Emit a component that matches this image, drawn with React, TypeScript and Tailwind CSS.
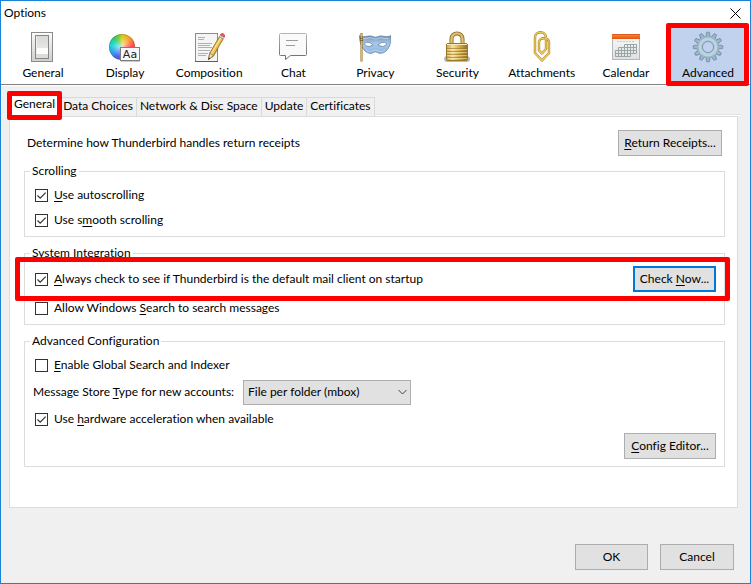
import { useState } from 'react';
import type { ReactNode } from 'react';

const tabs = ['General', 'Data Choices', 'Network & Disc Space', 'Update', 'Certificates'];

const categories = [
  { name: 'General', icon: <SwitchIcon /> },
  { name: 'Display', icon: <DisplayIcon /> },
  { name: 'Composition', icon: <ComposeIcon /> },
  { name: 'Chat', icon: <ChatIcon /> },
  { name: 'Privacy', icon: <MaskIcon /> },
  { name: 'Security', icon: <LockIcon /> },
  { name: 'Attachments', icon: <ClipIcon /> },
  { name: 'Calendar', icon: <CalendarIcon /> },
  { name: 'Advanced', icon: <GearIcon /> },
];

function SwitchIcon() {
  return (
    <svg className="w-8 h-8" viewBox="0 0 32 32">
      <defs>
        <linearGradient id="sw-frame" x1="0" y1="0" x2="0" y2="1">
          <stop offset="0" stopColor="#fbfbfb" />
          <stop offset="1" stopColor="#cfcfcd" />
        </linearGradient>
        <linearGradient id="sw-key" x1="0" y1="0" x2="0" y2="1">
          <stop offset="0" stopColor="#d8d8d6" />
          <stop offset="1" stopColor="#f4f4f3" />
        </linearGradient>
      </defs>
      <rect x="4.500" y="1.500" width="21" height="29" fill="url(#sw-frame)" stroke="#8b8b89" />
      <rect x="8.500" y="4.500" width="13" height="23" fill="url(#sw-key)" stroke="#868684" />
      <rect x="9" y="17" width="12" height="6" fill="#fdfdfd" />
      <rect x="9" y="23" width="12" height="4" fill="#dcdcda" />
      <path d="M9.500 5v18" stroke="#f2f2f0" />
    </svg>
  );
}

function DisplayIcon() {
  return (
    <span className="relative block w-8 h-8">
      <span className="absolute left-0 top-[3px] w-[26px] h-[26px] rounded-full bg-[conic-gradient(#d8d020,#ffa02a_40deg,#ff4a50_85deg,#f040a0_125deg,#9a50f0_170deg,#4a60f0_205deg,#30a0f0_240deg,#20d8e0_280deg,#38cc70_320deg,#88cc30_345deg,#d8d020)]">
        <span className="block w-full h-full rounded-full border border-black/20 bg-[radial-gradient(circle,#ffffffb0,#ffffff00_60%)]" />
      </span>
      <svg className="absolute inset-0 w-8 h-8" viewBox="0 0 32 32">
        <rect x="11.500" y="16.500" width="19" height="13" fill="#f8f8f8" stroke="#7d7d7d" />
        <path d="M12 30.500h19" stroke="#00000033" />
        <text x="21" y="27" textAnchor="middle" fontSize="11" fontFamily="DejaVu Sans, sans-serif" fill="#222">Aa</text>
      </svg>
    </span>
  );
}

function ComposeIcon() {
  return (
    <svg className="w-8 h-8" viewBox="0 0 32 32">
      <rect x="2.500" y="2.500" width="22" height="28" fill="#f5f5f5" stroke="#8c8c8c" />
      <path d="M2 30.500h23" stroke="#5d5d5d" />
      <path d="M5 6.500h7M5 8.500h6M5 12.500h14M5 14.500h12M5 16.500h14M5 19.500h12M5 22.500h10M5 24.500h8" stroke="#b0b0b0" />
      <path d="M17 27l3-2 5-8" fill="none" stroke="#00000033" strokeWidth="2" />
      <path d="M15.500 28.500l1.200-6.300L26.500 5.500l3.800 2.200L20.500 24.600z" fill="#e9bd48" stroke="#8c6514" strokeWidth=".8" />
      <path d="M18 23.500L28 6.400" stroke="#fae39a" strokeWidth="1.200" />
      <path d="M15.500 28.500l1.200-6.300 3.800 2.400z" fill="#f0dcb0" stroke="#7a6238" strokeWidth=".6" />
      <path d="M15.300 29l.5-2.600 1.400.9z" fill="#222" />
      <path d="M26.300 5.800l1.200-2 3.800 2.200-1.200 2z" fill="#c8ccd2" stroke="#888" strokeWidth=".5" />
      <path d="M27.500 3.800c.8-1.500 2-1.500 3-.9s1.500 1.700.8 3.100z" fill="#ee5a60" stroke="#e0484e" />
    </svg>
  );
}

function ChatIcon() {
  return (
    <svg className="w-8 h-8" viewBox="0 0 32 32">
      <defs>
        <linearGradient id="chat-line" x1="0" y1="0" x2="0" y2="1">
          <stop offset="0" stopColor="#b4b4b4" />
          <stop offset="1" stopColor="#6a6a6a" />
        </linearGradient>
      </defs>
      <path d="M3.500 2.500h25q1 0 1 1v20q0 1-1 1H13.500L8.500 28.500v-4h-5q-1 0-1-1v-20q0-1 1-1z" fill="#fafafa" stroke="url(#chat-line)" />
      <path d="M9 9.500h12M9 14.500h9" stroke="#9c9c9c" />
    </svg>
  );
}

function MaskIcon() {
  return (
    <svg className="w-8 h-8" viewBox="0 0 32 32">
      <defs>
        <linearGradient id="mask-fill" x1="0" y1="0" x2="0" y2="1">
          <stop offset="0" stopColor="#6f90b2" />
          <stop offset=".45" stopColor="#a9c9ea" />
          <stop offset="1" stopColor="#8db4de" />
        </linearGradient>
      </defs>
      <path d="M.5 4.500C4 7 9 4.500 12 5c2 .3 3 1.200 4.500 1.200S19 5.300 21 5c3-.5 7 2 11-.5C32 12 30.500 17 27 20c-3 2.500-6.500 3-8.500 1.500-1.500-.9-2.500-.9-4 0C12.500 23 9 22.500 6 20 3 17 .5 12 .5 4.500z" fill="url(#mask-fill)" stroke="#6684a3" strokeWidth=".8" />
      <path d="M3.500 7.500c3.500.7 6-1 8.500-.7 2 .2 3 1.200 4.500 1.200S19 7 21 6.800c2.500-.3 5 1.400 8.500.7" fill="none" stroke="#d3e3f3" strokeWidth=".7" />
      <path d="M7 19c2.500 2.200 5 2 7 .8 1.500-.8 3.500-.8 5 0 2 1.200 4.500 1.400 7-.8" fill="none" stroke="#c3d9ef" strokeWidth=".8" />
      <path d="M5 12.500q5-3 9 1.500-6 3.500-9-1.500zM28 12.500q-5-3-9 1.500 6 3.500 9-1.500z" fill="#fff" stroke="#5c7896" strokeWidth=".7" />
      <path d="M2.500 2v28.500" stroke="#95680c" strokeWidth="2" />
      <path d="M2.500 2.500V30" stroke="#e9b73a" />
      <path d="M1 7.500h3M1 9.500h3" stroke="#7b5a18" strokeWidth=".8" />
    </svg>
  );
}

function LockIcon() {
  return (
    <svg className="w-8 h-8" viewBox="0 0 32 32">
      <defs>
        <linearGradient id="lock-body" x1="0" y1="0" x2="1" y2="0">
          <stop offset="0" stopColor="#cfa645" />
          <stop offset=".3" stopColor="#f5e19c" />
          <stop offset=".6" stopColor="#d6ae4c" />
          <stop offset="1" stopColor="#94701f" />
        </linearGradient>
      </defs>
      <rect x="3" y="25" width="26" height="6" rx="3" fill="#00000044" />
      <path d="M10.500 14V8c0-7.500 11-7.500 11 0v6" fill="none" stroke="#8a6a20" strokeWidth="4" />
      <path d="M10.500 14V8c0-7.500 11-7.500 11 0v6" fill="none" stroke="#dfc072" strokeWidth="2.400" />
      <rect x="5.500" y="12.500" width="21" height="17" rx="1.500" fill="url(#lock-body)" stroke="#9a772b" />
      <path d="M6 13.500h20" stroke="#f7e8b4" />
      <path d="M6 17.500h20M6 20.500h20M6 23.500h20M6 26.500h20" stroke="#92712a" strokeWidth=".6" />
      <path d="M6 18.500h20M6 21.500h20M6 24.500h20M6 27.500h20" stroke="#ffefb4" strokeOpacity=".5" />
    </svg>
  );
}

function ClipIcon() {
  const wire = 'M20 18V6.500c0-7-11-7-11 0V22l7 7.500 7-7.500V11c0-5-10-5-10 0v8.500l3 3 4-4.500';

  return (
    <svg className="w-8 h-8" viewBox="0 0 32 32" fill="none" strokeLinecap="round" strokeLinejoin="round">
      <path d={wire} stroke="#ad8120" strokeWidth="2.400" />
      <path d={wire} stroke="#f0d067" strokeWidth="1.200" />
    </svg>
  );
}

function CalendarIcon() {
  return (
    <svg className="w-8 h-8" viewBox="0 0 32 32">
      <defs>
        <linearGradient id="cal-head" x1="0" y1="0" x2="0" y2="1">
          <stop offset="0" stopColor="#f98c3c" />
          <stop offset="1" stopColor="#ea5310" />
        </linearGradient>
        <linearGradient id="cal-page" x1="0" y1="0" x2="0" y2="1">
          <stop offset="0" stopColor="#fbfbfb" />
          <stop offset="1" stopColor="#dedfe0" />
        </linearGradient>
      </defs>
      <rect x="2.500" y="3.500" width="27" height="25" fill="url(#cal-page)" stroke="#b4b7b9" />
      <rect x="2" y="3" width="28" height="5" fill="url(#cal-head)" />
      <path d="M2 3.500h28" stroke="#d4511a" strokeWidth=".8" />
      <path d="M7 10.500h17" stroke="#c7c9cb" strokeDasharray="2 1" />
      <path d="M5.500 19.500v6M8.500 16.500v9M11.500 16.500v9M14.500 13.500v12M17.500 13.500v12M20.500 13.500v12M23.500 13.500v9M26.500 13.500v9M14.500 13.500h12M8.500 16.500h18M5.500 19.500h21M5.500 22.500h21M5.500 25.500h15" fill="none" stroke="#9aa5a6" />
    </svg>
  );
}

function GearIcon() {
  return (
    <svg className="w-8 h-8" viewBox="0 0 32 32">
      {[0, 30, 60, 90, 120, 150, 180, 210, 240, 270, 300, 330].map(a => (
        <path key={a} d="M13.800 6l.9-4.800h2.600l.9 4.800z" transform={`rotate(${a} 16 16)`} fill="#9cb6c6" stroke="#6d8ca2" strokeWidth=".8" />
      ))}
      <circle cx="16" cy="16" r="10.800" fill="#9cb6c6" />
      <circle cx="16" cy="16" r="8" fill="none" stroke="#bcd3e2" strokeWidth="3" />
      <circle cx="16" cy="16" r="5.500" fill="#c1d1ee" stroke="#7593a8" strokeWidth=".8" />
    </svg>
  );
}

function Highlight({ className }: { className: string }) {
  return <span className={`pointer-events-none absolute z-10 rounded-xs border-5 border-[#ff0000] ${className}`} />;
}

// underlined access key
function Key({ children }: { children: ReactNode }) {
  return <span className="underline underline-offset-2">{children}</span>;
}

function Button({ children, className = '' }: { children: ReactNode; className?: string }) {
  return (
    <button className={`h-[26px] bg-[#e1e1e1] whitespace-nowrap ${className}`}>
      {children}
    </button>
  );
}

function Check({ checked = false, children }: { checked?: boolean; children: ReactNode }) {
  const [on, setOn] = useState(checked);

  return (
    <label className="flex h-6 items-center gap-[6px] pl-[2px]">
      <span className="relative block w-[13px] h-[13px]">
        <input
          type="checkbox"
          checked={on}
          onChange={e => setOn(e.target.checked)}
          className="block w-full h-full appearance-none border border-[#333] bg-white"
        />
        {on && (
          <svg className="pointer-events-none absolute inset-0 w-full h-full" viewBox="0 0 13 13">
            <path d="M2.500 6.500l2.700 2.700 5.500-5.500" fill="none" stroke="#333" strokeWidth="1.200" />
          </svg>
        )}
      </span>
      <span>{children}</span>
    </label>
  );
}

function Group({ title, className, children }: { title: string; className: string; children: ReactNode }) {
  return (
    <fieldset className={`border border-[#dcdcdc] px-2 pt-1 ${className}`}>
      <legend className="-ml-[3px] h-4 px-[2px] leading-4">{title}</legend>
      {children}
    </fieldset>
  );
}

export default function App() {
  const [tab, setTab] = useState('General');
  const [category, setCategory] = useState('Advanced');

  return (
    <div className="flex min-h-screen flex-col border border-[#1883d7] bg-[#f0f0f0] text-xs text-black font-['Lato','Liberation_Sans',sans-serif] [font-variant-ligatures:none]">
      {/* title bar */}
      <header className="border-b border-[#828282] bg-white">
        <div className="flex h-6 items-center justify-between pl-[3px] pr-[9px]">
          <h1>Options</h1>
          <button aria-label="Close">
            <svg className="w-[11px] h-[11px]" viewBox="0 0 11 11">
              <path d="M.5.5l10 10M10.500.5l-10 10" stroke="#000" />
            </svg>
          </button>
        </div>

        {/* categories */}
        <nav className="flex px-px">
          {categories.map(c => (
            <button
              key={c.name}
              onClick={() => setCategory(c.name)}
              className={`relative flex h-[59px] min-w-[82px] flex-col items-center gap-[2px] px-[10px] pt-[6px] ${
                category === c.name ? 'bg-[#c1d2ee]' : ''
              }`}
            >
              {c.icon}
              <span>{c.name}</span>
              {c.name === 'Advanced' && <Highlight className="-left-px right-0 -top-[2px] -bottom-[2px]" />}
            </button>
          ))}
        </nav>
      </header>

      <main className="flex flex-1 flex-col border-t border-white pl-2 pr-3">
        <div role="tablist" className="flex items-end pt-2">
          {tabs.map(t => (
            <button
              key={t}
              role="tab"
              aria-selected={tab === t}
              onClick={() => setTab(t)}
              className={
                tab === t
                  ? 'relative h-[22px] bg-white px-[5px] pb-[2px]'
                  : 'h-[19px] border-t border-r border-[#d9d9d9] px-[3px] pb-[2px]'
              }
            >
              {t}
              {t === 'General' && <Highlight className="-inset-x-[2px] -top-[3px] -bottom-[4px]" />}
            </button>
          ))}
          <span className="-mr-[3px] h-[2px] flex-1 border-t border-[#e3e3e3] bg-white" />
        </div>

        <div className="flex-1 border border-[#dcdcdc] bg-white pl-[14px] pr-3">
          <div className="flex items-center justify-between px-[3px] pt-[13px] pb-[7px]">
            <p>Determine how Thunderbird handles return receipts</p>
            <Button className="w-[104px] border border-[#adadad]"><Key>R</Key>eturn Receipts...</Button>
          </div>

          <Group title="Scrolling" className="pb-1">
            <div className="flex flex-col gap-px">
              <Check checked><Key>U</Key>se autoscrolling</Check>
              <Check checked>Use s<Key>m</Key>ooth scrolling</Check>
            </div>
          </Group>

          <Group title="System Integration" className="mt-2 pb-1">
            <div className="relative flex h-7 items-center justify-between">
              <Check checked><Key>A</Key>lways check to see if Thunderbird is the default mail client on startup</Check>
              <Button className="w-[83px] border-2 border-[#0078d7]">Check <Key>N</Key>ow...</Button>
              <Highlight className="-left-[18px] -right-[14px] -top-2 -bottom-2" />
            </div>
            <div className="pt-[3px]">
              <Check>Allow Windows <Key>S</Key>earch to search messages</Check>
            </div>
          </Group>

          <Group title="Advanced Configuration" className="mt-2 pb-[7px]">
            <Check><Key>E</Key>nable Global Search and Indexer</Check>
            <div className="flex h-[30px] items-center gap-2">
              <label htmlFor="store" className="w-[202px]">Message Store <Key>T</Key>ype for new accounts:</label>
              <div className="relative">
                <select id="store" className="block h-[25px] w-[168px] appearance-none border border-[#adadad] bg-[#e1e1e1] pl-1">
                  <option>File per folder (mbox)</option>
                  <option>File per message (maildir)</option>
                </select>
                <svg className="pointer-events-none absolute right-1 top-2 w-[9px] h-[9px]" viewBox="0 0 9 9">
                  <path d="M.5 2l4 4 4-4" fill="none" stroke="#444" />
                </svg>
              </div>
            </div>
            <Check checked>Use <Key>h</Key>ardware acceleration when available</Check>
            <div className="flex justify-end pt-[2px]">
              <Button className="w-[92px] border border-[#adadad]"><Key>C</Key>onfig Editor...</Button>
            </div>
          </Group>
        </div>

        <footer className="flex justify-end gap-3 pt-9 pb-[13px] pr-1">
          <Button className="w-[73px] border border-[#adadad]">OK</Button>
          <Button className="w-[74px] border border-[#adadad]">Cancel</Button>
        </footer>
      </main>
    </div>
  );
}
